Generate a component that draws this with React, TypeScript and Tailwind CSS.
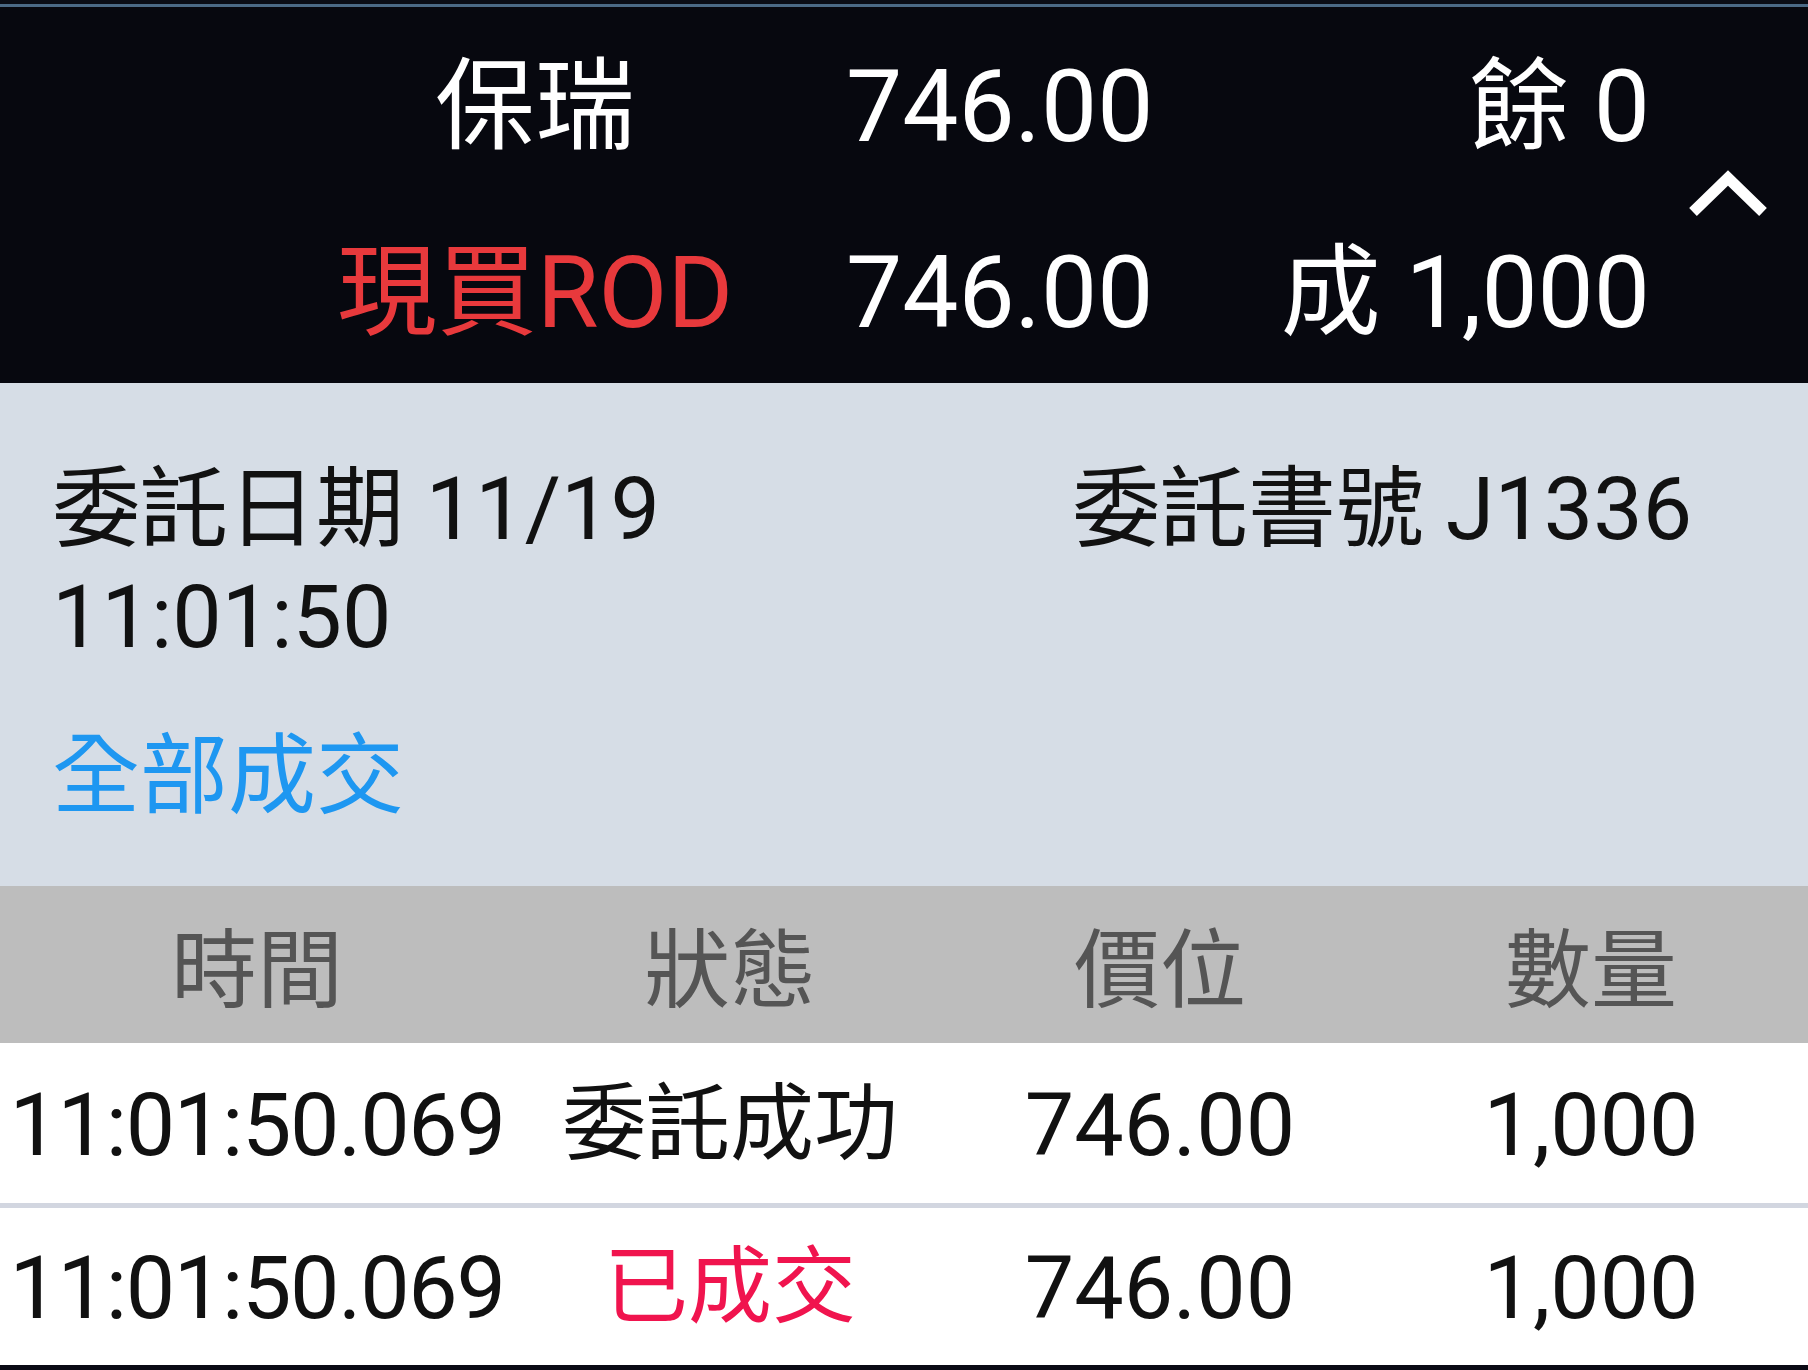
import React from 'react'

const fills = [
  { time: '11:01:50.069', status: '委託成功', statusColor: 'text-[#111111]', price: '746.00', qty: '1,000' },
  { time: '11:01:50.069', status: '已成交', statusColor: 'text-[#f0144e]', price: '746.00', qty: '1,000' },
]

const ChevronUp = () => (
  <svg width="80" height="52" viewBox="0 0 80 52" fill="none">
    <polyline points="5,45 40,11 75,45" stroke="#ffffff" strokeWidth="11" strokeLinecap="butt" strokeLinejoin="miter" />
  </svg>
)

const App: React.FC = () => {
  return (
    <div className="w-[1808px] h-[1370px] overflow-hidden bg-white font-['Roboto','Noto_Sans_CJK_TC',sans-serif]">
      {/* order summary */}
      <div className="relative h-[383px] overflow-hidden bg-[#07080f]">
        <div className="h-[4px] bg-[#0a0d16]" />
        <div className="h-[3px] bg-[#4b6a86]" />
        <div className="pt-[7px] text-[100px] text-white">
          <div className="flex h-[186px] items-center">
            <div className="w-[800px] pl-[270px] text-center">保瑞</div>
            <div className="pl-[46px]">746.00</div>
            <div className="flex-1 pr-[158px] text-right">餘 0</div>
          </div>
          <div className="flex h-[186px] items-center">
            <div className="w-[800px] pl-[270px] text-center text-[#e8393c]">現買ROD</div>
            <div className="pl-[46px]">746.00</div>
            <div className="flex-1 pr-[158px] text-right">成 1,000</div>
          </div>
        </div>
        <div className="absolute left-[1688px] top-[167px]">
          <ChevronUp />
        </div>
      </div>

      {/* order details */}
      <div className="flex h-[503px] bg-[#d6dde6] pt-[72px] text-[88px] leading-[108px] text-[#111111]">
        <div className="w-[1072px] pl-[52px]">
          <div>委託日期 11/19</div>
          <div>11:01:50</div>
          <div className="mt-[51px] text-[#1e97f1]">全部成交</div>
        </div>
        <div>委託書號 J1336</div>
      </div>

      {/* fills table */}
      <div className="grid h-[157px] grid-cols-[514px_432px_428px_434px] items-center bg-[#bdbdbd] pt-[14px] text-center text-[86px] text-[#555555]">
        <div>時間</div>
        <div>狀態</div>
        <div>價位</div>
        <div>數量</div>
      </div>
      {fills.map((f, i) => (
        <div
          key={i}
          className={
            i === 0
              ? 'grid h-[165px] grid-cols-[514px_432px_428px_434px] items-center border-b-[5px] border-[#d2d6e0] bg-white pt-[4px] text-center text-[88px] text-[#111111]'
              : 'grid h-[157px] grid-cols-[514px_432px_428px_434px] items-center bg-white pt-[2px] text-center text-[88px] text-[#111111]'
          }
        >
          <div className="tracking-[-0.015em]">{f.time}</div>
          <div className={'text-[84px] ' + f.statusColor}>{f.status}</div>
          <div>{f.price}</div>
          <div>{f.qty}</div>
        </div>
      ))}
      <div className="h-[5px] bg-[#0a0a14]" />
    </div>
  )
}

export default App
